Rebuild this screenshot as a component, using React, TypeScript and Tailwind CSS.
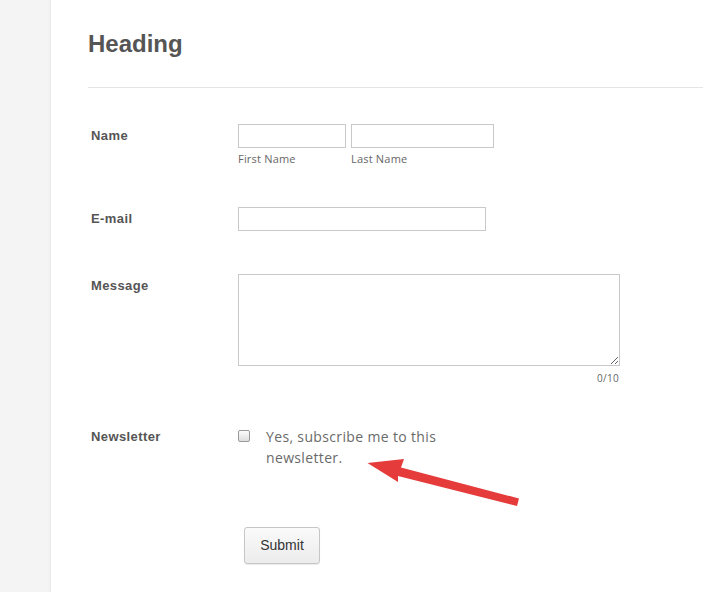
export default function App() {
  const label = 'w-[150px] shrink-0 pl-[3px] text-[13px] leading-[16px] font-bold tracking-[0.4px] text-[#555]'
  const input = 'h-[24px] border border-[#c9c9c9] bg-white'
  const sub = "mt-[4px] text-[11px] leading-[14px] tracking-[0.2px] text-[#666] font-['Open_Sans',sans-serif]"

  return (
    <div className="relative flex min-h-[592px] bg-[#f4f4f4] font-['Liberation_Sans',Arial,sans-serif]">
      <div className="w-[51px] shrink-0" />
      <div className="flex-1 bg-white pl-[37px] pt-[30px] shadow-[-1px_0_2px_rgba(0,0,0,0.06)]">
        <h1 className="text-[24px] leading-[28px] font-bold text-[#555]">Heading</h1>
        <div className="mt-[29px] h-px bg-[#e5e5e5]" />

        {/* Name */}
        <div className="mt-[36px] flex">
          <div className={label + ' pt-[4px]'}>Name</div>
          <div className="flex gap-[5px]">
            <div>
              <div className={input + ' w-[108px]'} />
              <div className={sub}>First Name</div>
            </div>
            <div>
              <div className={input + ' w-[143px]'} />
              <div className={sub}>Last Name</div>
            </div>
          </div>
        </div>

        {/* E-mail */}
        <div className="mt-[41px] flex">
          <div className={label + ' pt-[4px]'}>E-mail</div>
          <div className={input + ' w-[248px]'} />
        </div>

        {/* Message */}
        <div className="mt-[43px] flex">
          <div className={label + ' pt-[4px]'}>Message</div>
          <div className="w-[382px]">
            <textarea className="block h-[92px] w-[382px] border border-[#c9c9c9] bg-white outline-none" />
            <div className="mt-[6px] pr-[1px] text-right text-[10px] leading-[12px] tracking-[0.3px] text-[#666] font-['Open_Sans',sans-serif]">
              0/10
            </div>
          </div>
        </div>

        {/* Newsletter */}
        <div className="mt-[45px] flex">
          <div className={label}>Newsletter</div>
          <div className="flex">
            <span className="mt-[1px] h-[12px] w-[12px] shrink-0 rounded-[2px] border border-[#9a9a9a] bg-gradient-to-b from-[#fcfcfc] to-[#dedede]" />
            <div className="-mt-[3px] ml-[16px] w-[195px] text-[14px] leading-[21px] tracking-[0.35px] text-[#6a6a6a] font-['Open_Sans',sans-serif]">
              Yes, subscribe me to this newsletter.
            </div>
          </div>
        </div>

        <div className="mt-[59px] pl-[156px]">
          <button className="h-[37px] w-[76px] rounded-[3px] border border-[#c6c6c6] bg-gradient-to-b from-[#fafafa] to-[#ececec] text-[14px] text-[#333] shadow-[0_1px_1px_rgba(0,0,0,0.08)]">
            Submit
          </button>
        </div>
      </div>

      <svg className="pointer-events-none absolute left-0 top-0" width="703" height="592">
        <polygon
          points="367.5,463 404,459 401,467.5 519,498.5 517,506 398,476 398,482"
          fill="#e53b3b"
        />
      </svg>
    </div>
  )
}
